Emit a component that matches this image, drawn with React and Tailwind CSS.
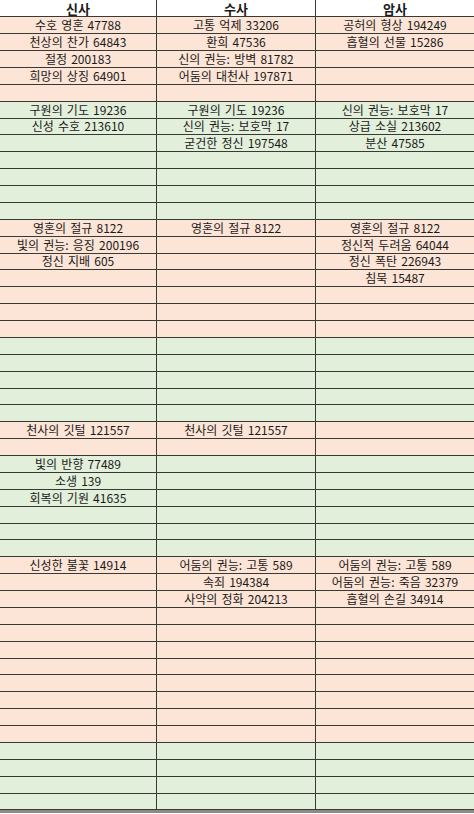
const PINK = 'bg-[#fce4d6]';
const GREEN = 'bg-[#e2efda]';

const empty = (n) => Array.from({ length: n }, () => ['', '', '']);

const groups = [
  {
    color: PINK,
    rows: [
      ['수호 영혼 47788', '고통 억제 33206', '공허의 형상 194249'],
      ['천상의 찬가 64843', '환희 47536', '흡혈의 선물 15286'],
      ['절정 200183', '신의 권능: 방벽 81782', ''],
      ['희망의 상징 64901', '어둠의 대천사 197871', ''],
      ...empty(1),
    ],
  },
  {
    color: GREEN,
    rows: [
      ['구원의 기도 19236', '구원의 기도 19236', '신의 권능: 보호막 17'],
      ['신성 수호 213610', '신의 권능: 보호막 17', '상급 소실 213602'],
      ['', '굳건한 정신 197548', '분산 47585'],
      ...empty(4),
    ],
  },
  {
    color: PINK,
    rows: [
      ['영혼의 절규 8122', '영혼의 절규 8122', '영혼의 절규 8122'],
      ['빛의 권능: 응징 200196', '', '정신적 두려움 64044'],
      ['정신 지배 605', '', '정신 폭탄 226943'],
      ['', '', '침묵 15487'],
      ...empty(3),
    ],
  },
  { color: GREEN, rows: empty(5) },
  {
    color: PINK,
    rows: [['천사의 깃털 121557', '천사의 깃털 121557', ''], ...empty(1)],
  },
  {
    color: GREEN,
    rows: [
      ['빛의 반향 77489', '', ''],
      ['소생 139', '', ''],
      ['회복의 기원 41635', '', ''],
      ...empty(3),
    ],
  },
  {
    color: PINK,
    rows: [
      ['신성한 불꽃 14914', '어둠의 권능: 고통 589', '어둠의 권능: 고통 589'],
      ['', '속죄 194384', '어둠의 권능: 죽음 32379'],
      ['', '사악의 정화 204213', '흡혈의 손길 34914'],
      ...empty(8),
    ],
  },
  { color: GREEN, rows: empty(4) },
];

function Row({ cells, color, header }) {
  return (
    <div
      className={`grid grid-cols-[157px_159px_1fr] border-b border-[#3a3a35] ${
        header ? 'h-[17.3px] bg-white font-bold text-[13px]' : `h-[16.88px] text-[12px] ${color}`
      }`}
    >
      {cells.map((text, i) => (
        <div
          key={i}
          className={`flex items-center justify-center whitespace-nowrap leading-none text-[#1a1a1a] [word-spacing:1.5px] ${
            i < 2 ? 'border-r border-[#3a3a35]' : ''
          }`}
        >
          {text}
        </div>
      ))}
    </div>
  );
}

export default function App() {
  return (
    <div
      className="w-[474px] h-[814px] overflow-hidden bg-white flex flex-col"
      style={{ fontFamily: '"Noto Sans CJK KR", "Noto Sans", sans-serif' }}
    >
      <Row header cells={['신사', '수사', '암사']} />
      {groups.map((g, gi) =>
        g.rows.map((cells, ri) => <Row key={`${gi}-${ri}`} cells={cells} color={g.color} />)
      )}
      <div className="h-[3px] bg-[#8a8a8a]" />
    </div>
  );
}
